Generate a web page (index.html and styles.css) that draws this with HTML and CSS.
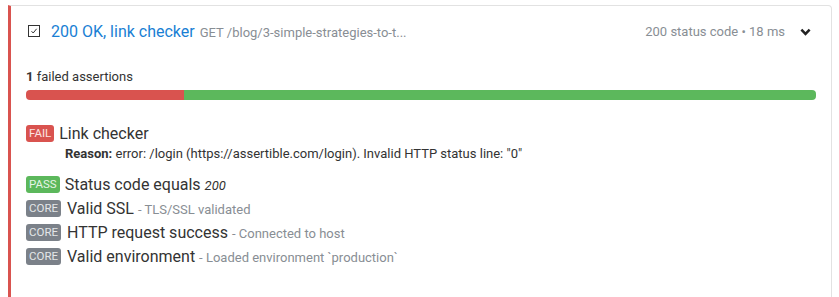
FILE: index.html
```html
<!DOCTYPE html>
<html lang="en">
  <head>
    <meta charset="utf-8" />
    <title>Test result</title>
    <link rel="stylesheet" href="styles.css">
  </head>
  <body>
    <div class="result-card">
      <div class="result-header">
        <span class="check-box" aria-hidden="true">
          <svg viewBox="0 0 12 12" width="12" height="12">
            <rect x="0.5" y="0.5" width="11" height="11" fill="none" stroke="#333" stroke-width="1" />
            <path d="M3.5 6.2 L5.2 8 L8.6 3.8" fill="none" stroke="#333" stroke-width="1" />
          </svg>
        </span>
        <a href="#" class="result-title">200 OK, link checker</a>
        <span class="result-url">GET /blog/3-simple-strategies-to-t...</span>
        <span class="result-meta">200 status code &bull; 18 ms</span>
        <span class="chevron" aria-hidden="true">
          <svg viewBox="0 0 12 8" width="11" height="8">
            <path d="M1.5 1.5 L6 6 L10.5 1.5" fill="none" stroke="#222" stroke-width="2.8" />
          </svg>
        </span>
      </div>

      <div class="result-body">
        <p class="failed-count"><b>1</b> failed assertions</p>
        <div class="progress">
          <div class="progress-fail" style="width: 20%"></div>
          <div class="progress-pass" style="width: 80%"></div>
        </div>

        <ul class="assertions">
          <li class="assertion">
            <span class="badge badge-fail">FAIL</span>
            <span class="assertion-name">Link checker</span>
            <div class="reason"><b>Reason:</b> error: /login (https://assertible.com/login). Invalid HTTP status line: "0"</div>
          </li>
          <li class="assertion gap-top">
            <span class="badge badge-pass">PASS</span>
            <span class="assertion-name">Status code equals <i>200</i></span>
          </li>
          <li class="assertion">
            <span class="badge badge-core">CORE</span>
            <span class="assertion-name">Valid SSL</span>
            <span class="assertion-note">- TLS/SSL validated</span>
          </li>
          <li class="assertion">
            <span class="badge badge-core">CORE</span>
            <span class="assertion-name">HTTP request success</span>
            <span class="assertion-note">- Connected to host</span>
          </li>
          <li class="assertion">
            <span class="badge badge-core">CORE</span>
            <span class="assertion-name">Valid environment</span>
            <span class="assertion-note">- Loaded environment `production`</span>
          </li>
        </ul>
      </div>
    </div>
  </body>
</html>
```

FILE: styles.css
```css
:root {
  --text: #333;
  --muted: #888e94;
  --red: #d9534f;
  --green: #5cb85c;
  --core: #7b8189;
  --blue: #1a7fd4;
}

* {
  box-sizing: border-box;
}

html,
body {
  margin: 0;
  padding: 0;
}

body {
  font-family: Roboto, "Liberation Sans", Arial, sans-serif;
  color: var(--text);
  background: #fff;
  padding: 5px 7px 0 8px;
}

.result-card {
  border: 1px solid #e2e2e2;
  border-left: 3px solid var(--red);
  border-radius: 0 4px 0 0;
  height: 320px;
}

.result-header {
  display: flex;
  align-items: center;
  padding: 0 16px 0 17px;
  height: 51px;
  white-space: nowrap;
}
.check-box {
  display: inline-flex;
  margin-right: 11px;
  margin-top: -2px;
}
.result-title {
  color: var(--blue);
  text-decoration: none;
  font-size: 16px;
}
.result-url {
  color: var(--muted);
  font-size: 13px;
  margin-left: 5px;
  margin-top: 1px;
}
.result-meta {
  margin-left: auto;
  color: var(--muted);
  font-size: 13px;
}
.chevron {
  display: inline-flex;
  margin-left: 15px;
  margin-right: 4px;
}

.result-body {
  padding: 12px 15px 0 15px;
}
.failed-count {
  margin: 0 0 5px;
  font-size: 13px;
  line-height: 16px;
}
.failed-count b {
  font-weight: 700;
}

.progress {
  display: flex;
  height: 10px;
  border-radius: 4px;
  overflow: hidden;
  margin-bottom: 24px;
}
.progress-fail {
  background: var(--red);
}
.progress-pass {
  background: var(--green);
}

.assertions {
  list-style: none;
  margin: 0;
  padding: 0;
}
.assertion {
  display: flex;
  flex-wrap: wrap;
  align-items: center;
  height: 24px;
  white-space: nowrap;
}
.assertion:first-child {
  height: auto;
}
.gap-top {
  margin-top: 11px;
}
.badge {
  display: inline-block;
  color: #fff;
  font-size: 11.5px;
  line-height: 17px;
  padding: 0 3px;
  border-radius: 3px;
  margin-right: 5px;
}
.badge-fail {
  background: var(--red);
  color: #fbe3e2;
}
.badge-pass {
  background: var(--green);
  color: #e6f4e6;
}
.badge-core {
  background: var(--core);
  color: #e4e6e8;
  margin-right: 6px;
}
.assertion-name {
  font-size: 16px;
}
.assertion-name i {
  font-size: 13px;
}
.assertion-note {
  color: var(--muted);
  font-size: 13px;
  margin-left: 4px;
  margin-top: 2px;
}
.reason {
  flex-basis: 100%;
  padding-left: 39px;
  font-size: 13px;
  margin-top: 3px;
}
```
